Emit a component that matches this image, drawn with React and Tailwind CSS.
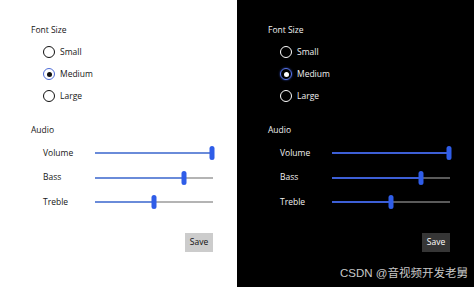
import React from "react";

const sizes = ["Small", "Medium", "Large"];
const sliders = [
  { label: "Volume", value: 99 },
  { label: "Bass", value: 75 },
  { label: "Treble", value: 50 },
];

function Radio({ label, checked, dark }) {
  return (
    <div className="flex h-[22px] items-center">
      <div
        className={
          "flex h-[12px] w-[12px] items-center justify-center rounded-full border-[1.5px] " +
          (checked
            ? dark
              ? "border-[#5b78f0] shadow-[0_0_2px_#3b5bdb]"
              : "border-[#4d6bd6]"
            : dark
            ? "border-white"
            : "border-[#111]")
        }
      >
        {checked && (
          <div
            className={
              "h-[5px] w-[5px] rounded-full " + (dark ? "bg-white" : "bg-[#111]")
            }
          />
        )}
      </div>
      <span className="ml-[5px]">{label}</span>
    </div>
  );
}

function Slider({ label, value, dark }) {
  return (
    <div className="flex h-[24.5px] items-center">
      <span className="w-[64px] pl-[12px]">{label}</span>
      <div className="relative flex h-[2px] w-[118px] items-center">
        <div
          className={dark ? "h-full bg-[#3d5fd6]" : "h-full bg-[#6a8bd9]"}
          style={{ width: value + "%" }}
        />
        <div className={dark ? "h-full flex-1 bg-[#5a5a5a]" : "h-full flex-1 bg-[#b4b4b4]"} />
        <div
          className="absolute top-1/2 h-[14px] w-[5px] -translate-x-1/2 -translate-y-1/2 rounded-full bg-[#2f5de8]"
          style={{ left: value + "%" }}
        />
      </div>
    </div>
  );
}

function Panel({ dark }) {
  return (
    <div
      className={
        "flex h-[287px] w-[237px] flex-col pl-[31px] pt-[24px] text-[8.5px] " +
        (dark ? "bg-black text-[#f0f0f0]" : "bg-white text-[#161616]")
      }
      style={{ fontFamily: '"Open Sans", "Noto Sans", sans-serif' }}
    >
      <div className="h-[12px] leading-[12px]">Font Size</div>
      <div className="mt-[5px] flex flex-col pl-[12px]">
        {sizes.map((s) => (
          <Radio key={s} label={s} checked={s === "Medium"} dark={dark} />
        ))}
      </div>
      <div className="mt-[17px] h-[12px] leading-[12px]">Audio</div>
      <div className="mt-[5px] flex flex-col">
        {sliders.map((s) => (
          <Slider key={s.label} label={s.label} value={s.value} dark={dark} />
        ))}
      </div>
      <div className="mt-[18px] flex w-[182px] justify-end">
        <button
          className={
            "h-[19px] w-[28px] text-[8.5px] " +
            (dark ? "bg-[#363636] text-white" : "bg-[#cccccc] text-[#111]")
          }
        >
          Save
        </button>
      </div>
    </div>
  );
}

export default function App() {
  return (
    <div className="relative flex h-[287px] w-[474px] overflow-hidden">
      <Panel />
      <Panel dark />
      <div
        className="absolute left-[340px] top-[265px] whitespace-nowrap text-[11.5px] leading-[16px] text-[#c8c8c8]"
        style={{ fontFamily: '"Liberation Sans", "Noto Sans CJK SC", sans-serif' }}
      >
        CSDN @音视频开发老舅
      </div>
    </div>
  );
}
